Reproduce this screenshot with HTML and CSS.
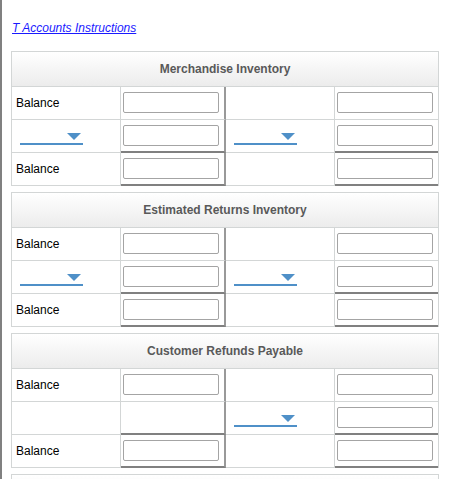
FILE: index.html
```html
<!DOCTYPE html>
<html>
<head>
<meta charset="utf-8">
<link rel="stylesheet" href="styles.css">
</head>
<body>
<div class="page">
  <div class="linkrow"><a class="instr" href="#">T Accounts Instructions</a></div>

  <div class="taccount">
    <div class="thead">Merchandise Inventory</div>
    <div class="trow">
      <div class="c c1"><span class="lbl">Balance</span></div>
      <div class="c c2"><input class="amt" type="text"></div>
      <div class="c c3"></div>
      <div class="c c4"><input class="amt" type="text"></div>
    </div>
    <div class="trow">
      <div class="c c1"><span class="dd"><span class="arrow"></span></span></div>
      <div class="c c2 total"><input class="amt" type="text"></div>
      <div class="c c3"><span class="dd"><span class="arrow"></span></span></div>
      <div class="c c4 total"><input class="amt" type="text"></div>
    </div>
    <div class="trow">
      <div class="c c1"><span class="lbl">Balance</span></div>
      <div class="c c2 total"><input class="amt" type="text"></div>
      <div class="c c3"></div>
      <div class="c c4 total"><input class="amt" type="text"></div>
    </div>
  </div>

  <div class="taccount">
    <div class="thead">Estimated Returns Inventory</div>
    <div class="trow">
      <div class="c c1"><span class="lbl">Balance</span></div>
      <div class="c c2"><input class="amt" type="text"></div>
      <div class="c c3"></div>
      <div class="c c4"><input class="amt" type="text"></div>
    </div>
    <div class="trow">
      <div class="c c1"><span class="dd"><span class="arrow"></span></span></div>
      <div class="c c2 total"><input class="amt" type="text"></div>
      <div class="c c3"><span class="dd"><span class="arrow"></span></span></div>
      <div class="c c4 total"><input class="amt" type="text"></div>
    </div>
    <div class="trow">
      <div class="c c1"><span class="lbl">Balance</span></div>
      <div class="c c2 total"><input class="amt" type="text"></div>
      <div class="c c3"></div>
      <div class="c c4 total"><input class="amt" type="text"></div>
    </div>
  </div>

  <div class="taccount">
    <div class="thead">Customer Refunds Payable</div>
    <div class="trow">
      <div class="c c1"><span class="lbl">Balance</span></div>
      <div class="c c2"><input class="amt" type="text"></div>
      <div class="c c3"></div>
      <div class="c c4"><input class="amt" type="text"></div>
    </div>
    <div class="trow">
      <div class="c c1"></div>
      <div class="c c2 total"></div>
      <div class="c c3"><span class="dd"><span class="arrow"></span></span></div>
      <div class="c c4 total"><input class="amt" type="text"></div>
    </div>
    <div class="trow">
      <div class="c c1"><span class="lbl">Balance</span></div>
      <div class="c c2 total"><input class="amt" type="text"></div>
      <div class="c c3"></div>
      <div class="c c4 total"><input class="amt" type="text"></div>
    </div>
  </div>

  <div class="taccount">
    <div class="thead">&nbsp;</div>
  </div>
</div>
</body>
</html>
```

FILE: styles.css
```css
html, body {
  margin: 0;
  padding: 0;
  background: #ffffff;
  overflow: hidden;
}

body {
  font-family: "Liberation Sans", Arial, sans-serif;
  font-size: 12px;
  color: #000;
}

.page {
  border-left: 2px solid #808080;
  height: 479px;
  box-sizing: border-box;
  padding: 21px 0 0 9px;
  display: flex;
  flex-direction: column;
  gap: 6px;
  overflow: hidden;
}

.linkrow {
  height: 14px;
  line-height: 14px;
  padding-left: 1px;
  margin-bottom: 10px;
}

.instr {
  color: #1a1aff;
  font-style: italic;
  text-decoration: underline;
  font-size: 12px;
}

.taccount {
  width: 428px;
  box-sizing: border-box;
  border: 1px solid #d3d6d6;
  border-bottom: none;
  flex: none;
}

.thead {
  height: 34px;
  border-bottom: 1px solid #d3d6d6;
  background: linear-gradient(#ffffff, #ececec);
  display: flex;
  align-items: center;
  justify-content: center;
  font-weight: bold;
  color: #595959;
  font-size: 12px;
}

.trow {
  display: grid;
  grid-template-columns: 109px 105px 109px 103px;
  height: 33px;
}

.c {
  box-sizing: border-box;
  height: 33px;
  border-bottom: 1px solid #d3d6d6;
  display: flex;
  align-items: flex-start;
}

.c1 {
  border-right: 1px solid #d3d6d6;
  padding-left: 4px;
  align-items: center;
}

.c2 {
  border-right: 2px solid #999999;
  padding: 5px 0 0 2px;
}

.c3 {
  border-right: 1px solid #d3d6d6;
}

.c4 {
  padding: 5px 0 0 2px;
}

.c.total {
  border-bottom: 2px solid #808080;
}

.lbl {
  font-size: 12px;
  color: #000;
  margin-top: -1px;
}

.amt {
  width: 96px;
  height: 21px;
  box-sizing: border-box;
  border: 1px solid #a4a4a4;
  border-radius: 2px;
  margin: 0;
  padding: 0 3px;
  background: #fff;
  font-family: "Liberation Sans", Arial, sans-serif;
  font-size: 12px;
}

.c1 .dd {
  margin-left: 4px;
}

.c3 .dd {
  margin-left: 8px;
}

.dd {
  display: block;
  position: relative;
  width: 63px;
  height: 25px;
  border-bottom: 2px solid #4f90c8;
  box-sizing: border-box;
  align-self: flex-start;
}

.arrow {
  position: absolute;
  right: 2px;
  top: 13px;
  width: 0;
  height: 0;
  border-left: 7px solid transparent;
  border-right: 7px solid transparent;
  border-top: 7px solid #4f90c8;
}
```
